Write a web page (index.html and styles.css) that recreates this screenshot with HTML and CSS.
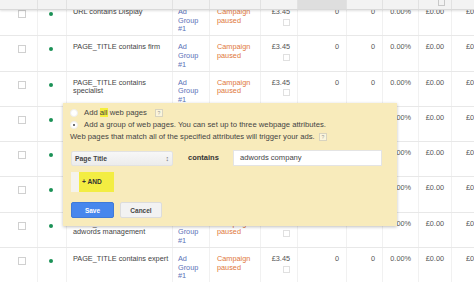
FILE: index.html
```html
<!DOCTYPE html>
<html lang="en">
  <head>
    <meta charset="UTF-8" />
    <meta name="viewport" content="width=device-width, initial-scale=1.0" />
    <title>Dynamic ad targets</title>
    <link rel="stylesheet" href="styles.css">
  </head>
  <body>
    <div class="grid-wrap">
      <!-- floating column header, stuck over the first row -->
      <div class="head">
        <span class="hc w-check"></span>
        <span class="hc w-dot"></span>
        <span class="hc w-target"></span>
        <span class="hc w-group"></span>
        <span class="hc w-status"></span>
        <span class="hc w-cpc"></span>
        <span class="hc w-num hc-sorted"></span>
        <span class="hc w-num2"></span>
        <span class="hc w-num2"></span>
        <span class="hc w-cost"><i class="col-icon"></i></span>
        <span class="hc w-last"></span>
      </div>

      <div class="rows">
        <div class="row">
          <div class="cell"><span class="check"></span></div>
          <div class="cell"><span class="dot"></span></div>
          <div class="cell target">URL contains Display</div>
          <div class="cell group">Ad Group #1</div>
          <div class="cell status">Campaign paused</div>
          <div class="cell num">£3.45<br><i class="mini"></i></div>
          <div class="cell num">0</div>
          <div class="cell num">0</div>
          <div class="cell num">0.00%</div>
          <div class="cell num">£0.00</div>
          <div class="cell last">£0.00</div>
        </div>
        <div class="row">
          <div class="cell"><span class="check"></span></div>
          <div class="cell"><span class="dot"></span></div>
          <div class="cell target">PAGE_TITLE contains firm</div>
          <div class="cell group">Ad Group #1</div>
          <div class="cell status">Campaign paused</div>
          <div class="cell num">£3.45<br><i class="mini"></i></div>
          <div class="cell num">0</div>
          <div class="cell num">0</div>
          <div class="cell num">0.00%</div>
          <div class="cell num">£0.00</div>
          <div class="cell last">£0.00</div>
        </div>
        <div class="row">
          <div class="cell"><span class="check"></span></div>
          <div class="cell"><span class="dot"></span></div>
          <div class="cell target">PAGE_TITLE contains specialist</div>
          <div class="cell group">Ad Group #1</div>
          <div class="cell status">Campaign paused</div>
          <div class="cell num">£3.45<br><i class="mini"></i></div>
          <div class="cell num">0</div>
          <div class="cell num">0</div>
          <div class="cell num">0.00%</div>
          <div class="cell num">£0.00</div>
          <div class="cell last">£0.00</div>
        </div>
        <div class="row">
          <div class="cell"><span class="check"></span></div>
          <div class="cell"><span class="dot"></span></div>
          <div class="cell target">PAGE_TITLE contains agency</div>
          <div class="cell group">Ad Group #1</div>
          <div class="cell status">Campaign paused</div>
          <div class="cell num">£3.45<br><i class="mini"></i></div>
          <div class="cell num">0</div>
          <div class="cell num">0</div>
          <div class="cell num">0.00%</div>
          <div class="cell num">£0.00</div>
          <div class="cell last">£0.00</div>
        </div>
        <div class="row">
          <div class="cell"><span class="check"></span></div>
          <div class="cell"><span class="dot"></span></div>
          <div class="cell target">PAGE_TITLE contains adwords</div>
          <div class="cell group">Ad Group #1</div>
          <div class="cell status">Campaign paused</div>
          <div class="cell num">£3.45<br><i class="mini"></i></div>
          <div class="cell num">0</div>
          <div class="cell num">0</div>
          <div class="cell num">0.00%</div>
          <div class="cell num">£0.00</div>
          <div class="cell last">£0.00</div>
        </div>
        <div class="row">
          <div class="cell"><span class="check"></span></div>
          <div class="cell"><span class="dot"></span></div>
          <div class="cell target">PAGE_TITLE contains consultant</div>
          <div class="cell group">Ad Group #1</div>
          <div class="cell status">Campaign paused</div>
          <div class="cell num">£3.45<br><i class="mini"></i></div>
          <div class="cell num">0</div>
          <div class="cell num">0</div>
          <div class="cell num">0.00%</div>
          <div class="cell num">£0.00</div>
          <div class="cell last">£0.00</div>
        </div>
        <div class="row">
          <div class="cell"><span class="check"></span></div>
          <div class="cell"><span class="dot"></span></div>
          <div class="cell target">PAGE_TITLE contains adwords management</div>
          <div class="cell group">Ad Group #1</div>
          <div class="cell status">Campaign paused</div>
          <div class="cell num">£3.45<br><i class="mini"></i></div>
          <div class="cell num">0</div>
          <div class="cell num">0</div>
          <div class="cell num">0.00%</div>
          <div class="cell num">£0.00</div>
          <div class="cell last">£0.00</div>
        </div>
        <div class="row">
          <div class="cell"><span class="check"></span></div>
          <div class="cell"><span class="dot"></span></div>
          <div class="cell target">PAGE_TITLE contains expert</div>
          <div class="cell group">Ad Group #1</div>
          <div class="cell status">Campaign paused</div>
          <div class="cell num">£3.45<br><i class="mini"></i></div>
          <div class="cell num">0</div>
          <div class="cell num">0</div>
          <div class="cell num">0.00%</div>
          <div class="cell num">£0.00</div>
          <div class="cell last">£0.00</div>
        </div>
      </div>

      <!-- inline editor for the targeting rule -->
      <div class="editor">
        <label class="opt">
          <span class="radio"></span>
          <span>Add <mark>all</mark> web pages</span>
          <span class="help">?</span>
        </label>
        <label class="opt">
          <span class="radio on"></span>
          <span>Add a group of web pages. You can set up to three webpage attributes.</span>
        </label>
        <p class="note">Web pages that match all of the specified attributes will trigger your ads. <span class="help">?</span></p>

        <div class="rule">
          <div class="select">Page Title <span class="arrows">&#x2195;</span></div>
          <span class="op">contains</span>
          <div class="input">adwords company</div>
        </div>

        <div class="and-row">
          <span class="and-pad"></span>
          <span class="and-btn">+ AND</span>
        </div>

        <div class="actions">
          <button class="btn-save">Save</button>
          <button class="btn-cancel">Cancel</button>
        </div>
      </div>
    </div>
  </body>
</html>
```

FILE: styles.css
```css
body {
  margin: 0;
  width: 474px;
  height: 282px;
  overflow: hidden;
  background: #fff;
  font-family: "Liberation Sans", Arial, sans-serif;
  color: #444;
}

.grid-wrap {
  position: relative;
  width: 474px;
  height: 282px;
  overflow: hidden;
}

/* header strip */
.head {
  position: absolute;
  top: 0;
  left: 0;
  display: flex;
  height: 9px;
  background: #f3f3f3;
  border-bottom: 1px solid #d9d9d9;
  box-shadow: 0 1px 2px rgba(0, 0, 0, 0.12);
  z-index: 2;
}

.hc {
  display: block;
  flex: none;
  box-sizing: border-box;
  height: 9px;
  border-right: 1px solid #e2e2e2;
  position: relative;
}

.hc-sorted {
  background: #dedede;
}

.col-icon {
  position: absolute;
  right: 6px;
  top: -1px;
  width: 5px;
  height: 5px;
  border: 1px solid #c8c8c8;
}

.w-check { width: 38px; }
.w-dot { width: 29px; }
.w-target { width: 106px; }
.w-group { width: 37px; }
.w-status { width: 51px; }
.w-cpc { width: 37px; }
.w-num { width: 49px; }
.w-num2 { width: 36px; }
.w-cost { width: 33px; }
.w-last { width: 41px; }

/* rows */
.rows {
  padding-top: 1px;
}

.row {
  display: grid;
  grid-template-columns: 38px 29px 106px 37px 51px 37px 49px 36px 36px 33px 41px;
  height: 35.3px;
  box-sizing: border-box;
  border-bottom: 1px solid #e8e8e8;
  font-size: 7.3px;
  line-height: 8.7px;
}

.cell {
  box-sizing: border-box;
  padding: 7px 0 0;
  border-right: 1px solid #f1f1f1;
  overflow: hidden;
}

.check {
  display: block;
  width: 8px;
  height: 8px;
  box-sizing: border-box;
  margin: 2px 0 0 18px;
  border: 1px solid #d0d0d0;
  background: #fff;
}

.dot {
  display: block;
  width: 4px;
  height: 4px;
  margin: 4px 0 0 11px;
  border-radius: 50%;
  background: #1a9156;
}

.target {
  padding-left: 6px;
  padding-right: 0;
  color: #444;
}

.group {
  padding-left: 5px;
  padding-right: 4px;
  color: #5b72b8;
}

.status {
  padding-left: 7px;
  padding-right: 3px;
  color: #e0773a;
}

.num {
  text-align: right;
  padding-right: 7px;
  color: #555;
}

.last {
  padding-left: 14px;
  color: #555;
  white-space: nowrap;
}

.mini {
  display: inline-block;
  width: 5px;
  height: 5px;
  margin-top: 2px;
  border: 1px solid #e0e0e0;
}

/* editor popup */
.editor {
  position: absolute;
  left: 63px;
  top: 103px;
  width: 334px;
  height: 123px;
  box-sizing: border-box;
  padding: 4px 7px 0;
  background: #f8ebbb;
  box-shadow: 0 1px 3px rgba(0, 0, 0, 0.25);
  font-size: 7.7px;
  line-height: 12px;
  color: #444;
  z-index: 3;
}

.opt {
  display: flex;
  align-items: center;
  gap: 6px;
  height: 12px;
}

.radio {
  display: block;
  width: 8px;
  height: 8px;
  box-sizing: border-box;
  border-radius: 50%;
  background: #fff;
  border: 1px solid #eee;
  position: relative;
}

.radio.on::after {
  content: "";
  position: absolute;
  left: 2px;
  top: 2px;
  width: 2px;
  height: 2px;
  border-radius: 50%;
  background: #444;
}

mark {
  background: #f5ef3c;
  color: #444;
}

.help {
  display: inline-block;
  width: 6px;
  height: 6px;
  border: 1px solid #d8d3bf;
  background: #fbf5dc;
  color: #999;
  font-size: 5px;
  line-height: 6px;
  text-align: center;
  margin-left: 2px;
  vertical-align: middle;
}

.note {
  margin: 0;
  height: 12px;
}

.rule {
  display: flex;
  align-items: center;
  margin-top: 7px;
  height: 16px;
}

.select {
  display: flex;
  align-items: center;
  justify-content: space-between;
  width: 102px;
  height: 15px;
  box-sizing: border-box;
  padding: 0 3px 0 3px;
  margin-left: 1px;
  background: linear-gradient(#f7f7f7, #ececec);
  border: 1px solid #e2e2e2;
  border-radius: 2px;
  font-weight: bold;
  font-size: 6.8px;
  line-height: 13px;
  color: #444;
}

.arrows {
  font-size: 7px;
  color: #666;
}

.op {
  margin-left: 15px;
  width: 45px;
  font-weight: bold;
  font-size: 7.5px;
  color: #333;
}

.input {
  width: 149px;
  height: 16px;
  box-sizing: border-box;
  padding-left: 6px;
  background: #fff;
  border: 1px solid #e4e4e4;
  font-size: 7.6px;
  line-height: 14px;
  color: #444;
}

.and-row {
  display: flex;
  margin-top: 6px;
  margin-left: 1px;
  height: 20px;
}

.and-pad {
  width: 8px;
  background: #f5f3ec;
}

.and-btn {
  width: 35px;
  box-sizing: border-box;
  padding-left: 3px;
  background: #f3ed42;
  font-weight: bold;
  font-size: 6.6px;
  line-height: 20px;
  color: #333;
}

.actions {
  display: flex;
  gap: 6px;
  margin-top: 10px;
  margin-left: 1px;
}

.actions button {
  height: 16px;
  padding: 0;
  border-radius: 2px;
  font-family: "Liberation Sans", Arial, sans-serif;
  font-weight: bold;
  font-size: 6.5px;
  cursor: pointer;
}

.btn-save {
  width: 43px;
  background: #4787ed;
  border: 1px solid #3f7ad8;
  color: #fff;
}

.btn-cancel {
  width: 42px;
  background: #f2f2f2;
  border: 1px solid #dcdcdc;
  color: #444;
}
```
